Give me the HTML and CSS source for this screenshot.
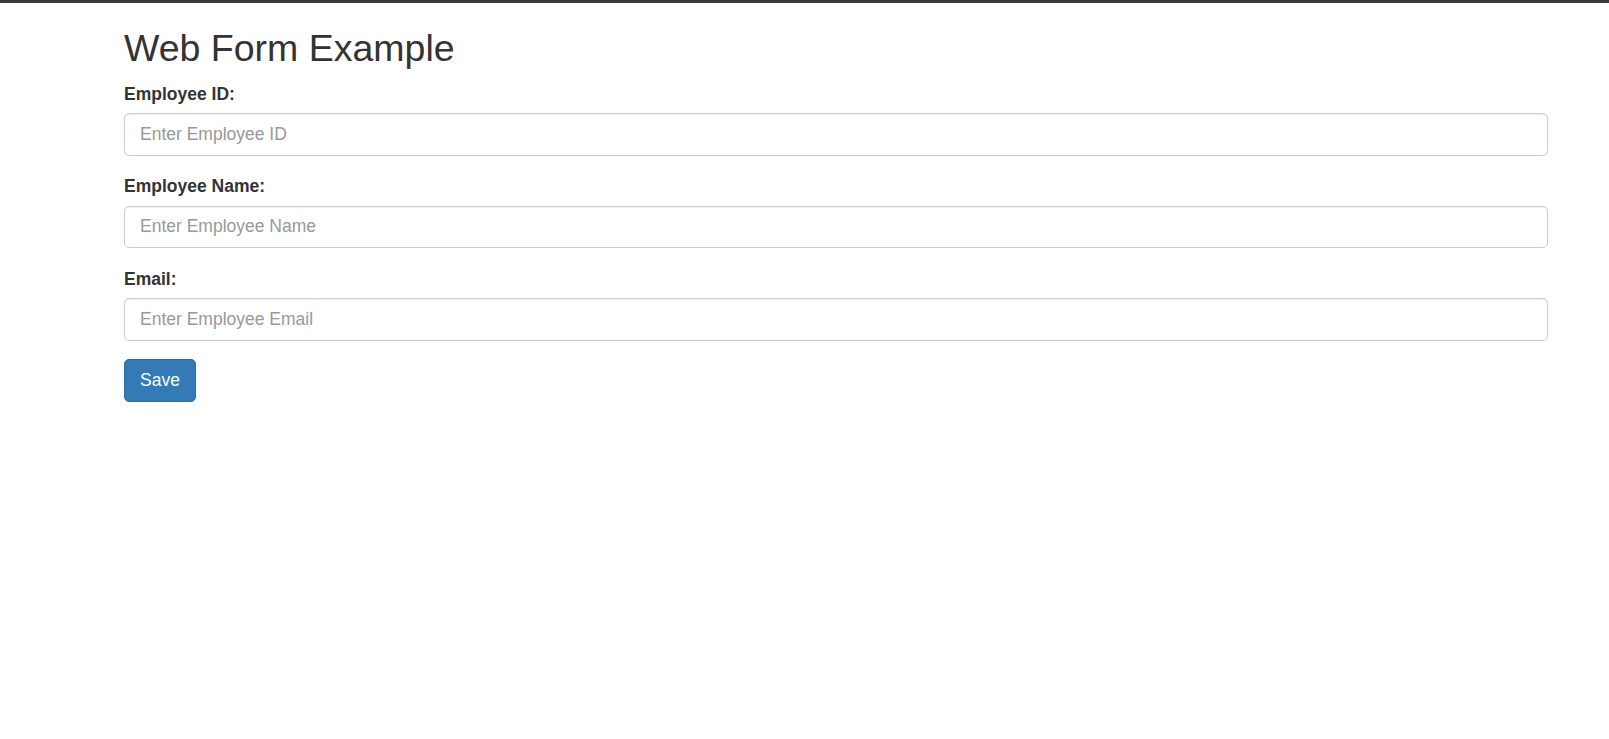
FILE: index.html
```html
<!DOCTYPE html>
<html lang="en">
<head>
<meta charset="utf-8">
<title>Web Form Example</title>
<link rel="stylesheet" href="styles.css">
</head>
<body>
<div class="topbar"></div>
<div class="container">
  <h2 class="title">Web Form Example</h2>
  <form class="form">
    <div class="form-group">
      <label class="label" for="eid">Employee ID:</label>
      <input class="form-control" id="eid" type="text" placeholder="Enter Employee ID">
    </div>
    <div class="form-group">
      <label class="label" for="ename">Employee Name:</label>
      <input class="form-control" id="ename" type="text" placeholder="Enter Employee Name">
    </div>
    <div class="form-group">
      <label class="label" for="email">Email:</label>
      <input class="form-control" id="email" type="email" placeholder="Enter Employee Email">
    </div>
    <button type="button" class="btn">Save</button>
  </form>
</div>
</body>
</html>
```

FILE: styles.css
```css
* { box-sizing: border-box; }
html, body {
  margin: 0;
  padding: 0;
  background: #fff;
}
body {
  font-family: "Liberation Sans", Arial, Helvetica, sans-serif;
  font-size: 17.5px;
  line-height: 25px;
  color: #333;
}
.topbar {
  height: 3px;
  background: #3a3a3c;
}
.container {
  padding: 0 61px 0 124px;
}
.title {
  margin: 25px 0 12.5px;
  font-size: 37.5px;
  font-weight: 400;
  line-height: 1.1;
  color: #333;
}
.form {
  display: flex;
  flex-direction: column;
  align-items: flex-start;
}
.form-group {
  width: 100%;
  margin-bottom: 18.75px;
}
.label {
  display: inline-block;
  font-weight: 700;
  margin-bottom: 6.25px;
}
.form-control {
  display: block;
  width: 100%;
  height: 42.5px;
  padding: 7.5px 15px;
  font-family: inherit;
  font-size: 17.5px;
  line-height: 25px;
  color: #555;
  background: #fff;
  border: 1px solid #ccc;
  border-radius: 5px;
  box-shadow: inset 0 1px 1px rgba(0,0,0,.075);
  outline: none;
}
.form-control::placeholder {
  color: #999;
  opacity: 1;
}
.btn {
  height: 42.5px;
  padding: 7.5px 15px;
  font-family: inherit;
  font-size: 17.5px;
  line-height: 25px;
  color: #fff;
  background: #337ab7;
  border: 1px solid #2e6da4;
  border-radius: 5px;
  cursor: pointer;
}
```
